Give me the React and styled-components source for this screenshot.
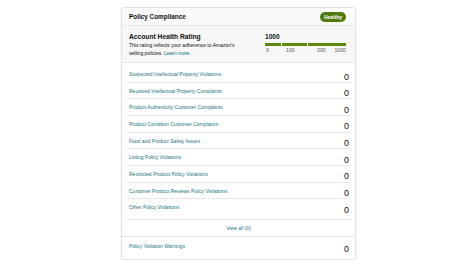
import React from 'react';
import styled, { createGlobalStyle } from 'styled-components';

const GlobalStyle = createGlobalStyle`
  html, body {
    margin: 0;
    padding: 0;
    background: #ffffff;
  }
  body {
    font-family: "Liberation Sans", Arial, sans-serif;
    color: #0f1111;
  }
`;

const violations = [
  'Suspected Intellectual Property Violations',
  'Received Intellectual Property Complaints',
  'Product Authenticity Customer Complaints',
  'Product Condition Customer Complaints',
  'Food and Product Safety Issues',
  'Listing Policy Violations',
  'Restricted Product Policy Violations',
  'Customer Product Reviews Policy Violations',
  'Other Policy Violations',
];

const App = () => {
  return (
    <Page>
      <GlobalStyle />
      <Card>
        <Header>
          <Title>Policy Compliance</Title>
          <Badge>Healthy</Badge>
        </Header>

        <Rating>
          <RatingText>
            <RatingTitle>Account Health Rating</RatingTitle>
            <RatingDesc>
              This rating reflects your adherence to Amazon's
              <br />
              selling policies. <Link>Learn more.</Link>
            </RatingDesc>
          </RatingText>
          <Score>
            <ScoreValue>1000</ScoreValue>
            <Bar>
              <Segment size={16} />
              <Segment size={25} />
              <Segment size={38} grow />
            </Bar>
            <Scale>
              <Tick size={17}>0</Tick>
              <Tick size={26} pad={3}>100</Tick>
              <Tick grow pad={5}>
                <span>200</span>
                <span>1000</span>
              </Tick>
            </Scale>
          </Score>
        </Rating>

        <List>
          {violations.map((label, i) => (
            <Row key={label} last={i === violations.length - 1}>
              <RowLabel>{label}</RowLabel>
              <Count>0</Count>
            </Row>
          ))}
          <ViewAll>View all (0)</ViewAll>
        </List>

        <Warnings>
          <RowLabel>Policy Violation Warnings</RowLabel>
          <Count>0</Count>
        </Warnings>
      </Card>
    </Page>
  );
};

export default App;

const Page = styled.div`
  padding: 7px 0 0 121px;
`;

const Card = styled.div`
  width: 235px;
  box-sizing: border-box;
  border: 1px solid #dfe2e2;
  border-radius: 3px;
  box-shadow: 0 1px 2px rgba(15, 17, 17, 0.08);
  background: #fff;
  overflow: hidden;
`;

const Header = styled.div`
  height: 18px;
  box-sizing: border-box;
  display: flex;
  align-items: center;
  justify-content: space-between;
  padding: 0 9px 0 7px;
  background: #fafafa;
  border-bottom: 1px solid #e7e9e9;
`;

const Title = styled.div`
  font-size: 6.4px;
  font-weight: 700;
  line-height: 8px;
`;

const Badge = styled.div`
  height: 10px;
  width: 26px;
  border-radius: 5px;
  background: #4f7b0d;
  color: #fff;
  font-size: 5px;
  font-weight: 700;
  display: flex;
  align-items: center;
  justify-content: center;
`;

const Rating = styled.div`
  height: 37px;
  box-sizing: border-box;
  display: flex;
  justify-content: space-between;
  padding: 7px 9px 0 7px;
  background: #f7f7f7;
  border-bottom: 1px solid #e7e9e9;
`;

const RatingText = styled.div`
  display: flex;
  flex-direction: column;
`;

const RatingTitle = styled.div`
  font-size: 6.7px;
  font-weight: 700;
  line-height: 8px;
`;

const RatingDesc = styled.div`
  margin-top: 1px;
  font-size: 5px;
  line-height: 7.5px;
  color: #0f1111;
`;

const Link = styled.span`
  color: #007185;
`;

const Score = styled.div`
  width: 81px;
  display: flex;
  flex-direction: column;
`;

const ScoreValue = styled.div`
  font-size: 6.6px;
  font-weight: 700;
  line-height: 8px;
`;

const Bar = styled.div`
  margin-top: 2px;
  display: flex;
  gap: 1px;
  height: 3px;
`;

const Segment = styled.div`
  width: ${p => p.size}px;
  flex: ${p => (p.grow ? '1' : 'none')};
  background: #5a8a0c;
`;

const Scale = styled.div`
  margin-top: 1px;
  display: flex;
  font-size: 5.2px;
  line-height: 6px;
  color: #565959;
`;

const Tick = styled.div`
  width: ${p => (p.size ? `${p.size}px` : 'auto')};
  flex: ${p => (p.grow ? '1' : 'none')};
  padding-left: ${p => p.pad || 1}px;
  display: flex;
  justify-content: space-between;
`;

const List = styled.div`
  padding: 3px 4px 0;
  border-bottom: 1px solid #e7e9e9;
`;

const Row = styled.div`
  height: ${p => (p.last ? '20px' : '16.67px')};
  box-sizing: border-box;
  display: flex;
  justify-content: space-between;
  align-items: flex-start;
  padding: 0 2px 0 3px;
  border-bottom: ${p => (p.last ? 'none' : '1px solid #e7e9e9')};
`;

const RowLabel = styled.div`
  margin-top: 5px;
  font-size: 5px;
  line-height: 6px;
  color: #1b7383;
`;

const Count = styled.div`
  margin-top: 5.5px;
  font-size: 9px;
  line-height: 10px;
  color: #0f1111;
`;

const ViewAll = styled.div`
  height: 17px;
  box-sizing: border-box;
  border-top: 1px solid #e7e9e9;
  display: flex;
  align-items: center;
  justify-content: center;
  font-size: 5px;
  color: #1b7383;
`;

const Warnings = styled.div`
  height: 21px;
  display: flex;
  justify-content: space-between;
  align-items: flex-start;
  padding: 1px 6px 0 7px;
`;
